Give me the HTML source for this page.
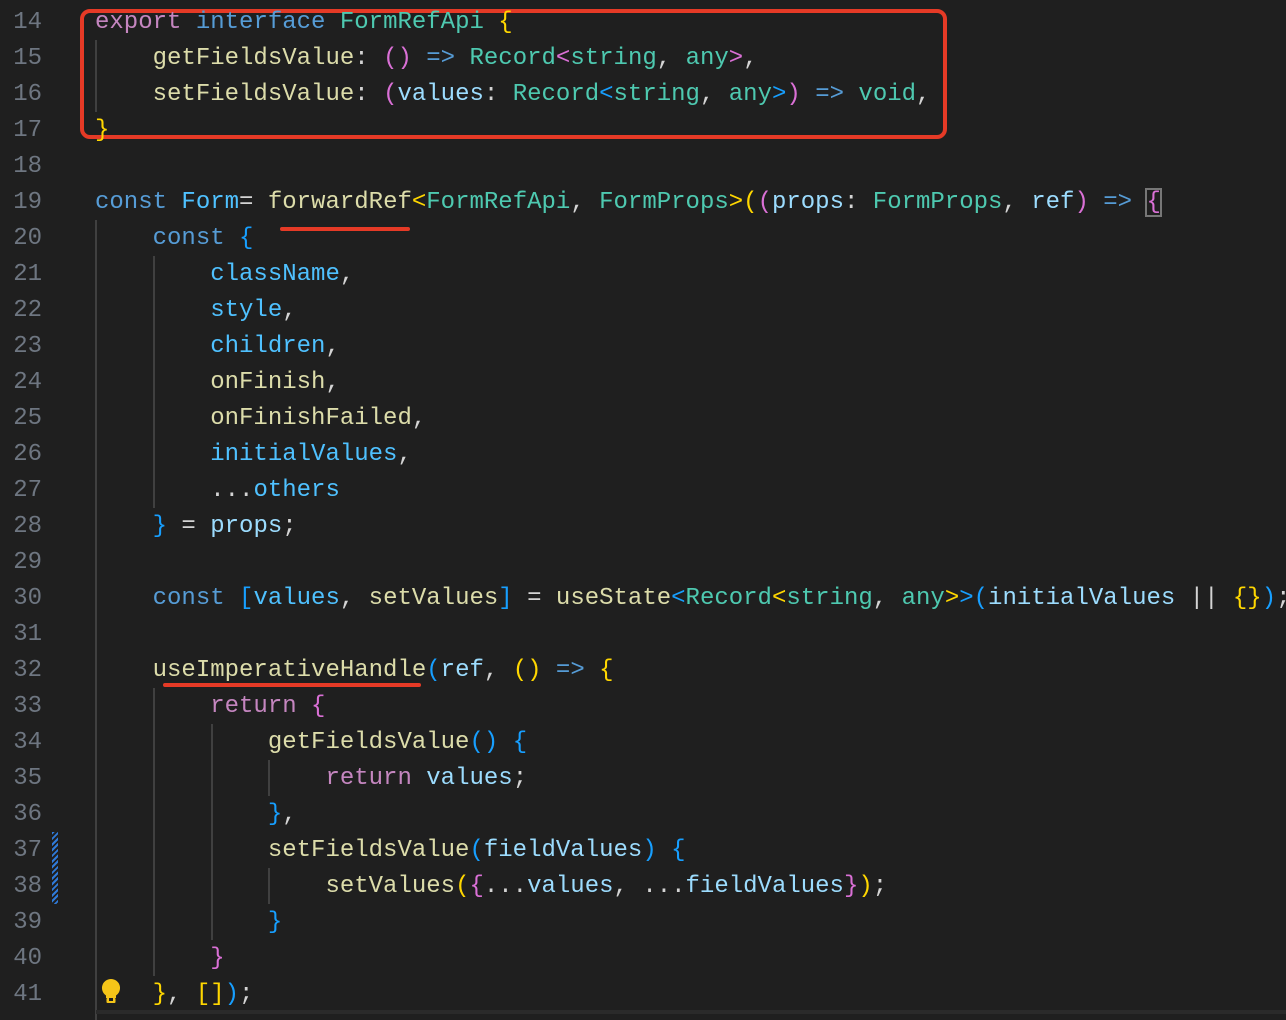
<!DOCTYPE html>
<html><head><meta charset="utf-8"><style>
html,body{margin:0;padding:0;background:#1f1f1f;width:1286px;height:1020px;overflow:hidden;position:relative}
.ln{position:absolute;left:0;width:42px;text-align:right;color:#6e7681;font:24px/36px "Liberation Mono",monospace}
.code{position:absolute;left:95px;top:5px;font:24px/36px "Liberation Mono",monospace;color:#d4d4d4;z-index:2}
.code div{height:36px;white-space:pre}
.k{color:#c586c0}.s{color:#569cd6}.t{color:#4ec9b0}.f{color:#dcdcaa}.v{color:#9cdcfe}.c{color:#4fc1ff}
.g{color:#ffd700}.p{color:#da70d6}.b{color:#179fff}
.guide{position:absolute;width:2px;background:#404040}
.red{position:absolute;background:#e53a26;z-index:1}
</style></head><body>
<div style="position:absolute;left:0;top:5px">
<div class="ln">14</div><div class="ln" style="top:36px">15</div><div class="ln" style="top:72px">16</div><div class="ln" style="top:108px">17</div><div class="ln" style="top:144px">18</div><div class="ln" style="top:180px">19</div><div class="ln" style="top:216px">20</div><div class="ln" style="top:252px">21</div><div class="ln" style="top:288px">22</div><div class="ln" style="top:324px">23</div><div class="ln" style="top:360px">24</div><div class="ln" style="top:396px">25</div><div class="ln" style="top:432px">26</div><div class="ln" style="top:468px">27</div><div class="ln" style="top:504px">28</div><div class="ln" style="top:540px">29</div><div class="ln" style="top:576px">30</div><div class="ln" style="top:612px">31</div><div class="ln" style="top:648px">32</div><div class="ln" style="top:684px">33</div><div class="ln" style="top:720px">34</div><div class="ln" style="top:756px">35</div><div class="ln" style="top:792px">36</div><div class="ln" style="top:828px">37</div><div class="ln" style="top:864px">38</div><div class="ln" style="top:900px">39</div><div class="ln" style="top:936px">40</div><div class="ln" style="top:972px">41</div>
</div>
<div class="guide" style="left:95px;top:40px;height:72px"></div>
<div class="guide" style="left:95px;top:220px;height:800px"></div>
<div class="guide" style="left:153px;top:256px;height:252px"></div>
<div class="guide" style="left:153px;top:688px;height:288px"></div>
<div class="guide" style="left:211px;top:724px;height:216px"></div>
<div class="guide" style="left:268px;top:760px;height:36px"></div>
<div class="guide" style="left:268px;top:868px;height:36px"></div>
<div style="position:absolute;left:52px;top:832px;width:6px;height:72px;background:repeating-linear-gradient(135deg,#2f7ad8 0 2px,transparent 2px 4px)"></div>
<div style="position:absolute;left:96px;top:1010px;width:1190px;height:4px;background:#2a2a2a"></div>
<div style="position:absolute;left:80px;top:9px;width:859px;height:122px;border:4px solid #e53a26;border-radius:10px;z-index:1"></div>
<div class="code"><div><span class="k">export</span> <span class="s">interface</span> <span class="t">FormRefApi</span> <span class="g">{</span></div><div>    <span class="f">getFieldsValue</span>: <span class="p">()</span> <span class="s">=&gt;</span> <span class="t">Record</span><span class="p">&lt;</span><span class="t">string</span>, <span class="t">any</span><span class="p">&gt;</span>,</div><div>    <span class="f">setFieldsValue</span>: <span class="p">(</span><span class="v">values</span>: <span class="t">Record</span><span class="b">&lt;</span><span class="t">string</span>, <span class="t">any</span><span class="b">&gt;</span><span class="p">)</span> <span class="s">=&gt;</span> <span class="t">void</span>,</div><div><span class="g">}</span></div><div></div><div><span class="s">const</span> <span class="c">Form</span>= <span class="f">forwardRef</span><span class="g">&lt;</span><span class="t">FormRefApi</span>, <span class="t">FormProps</span><span class="g">&gt;(</span><span class="p">(</span><span class="v">props</span>: <span class="t">FormProps</span>, <span class="v">ref</span><span class="p">)</span> <span class="s">=&gt;</span> <span class="p" style="outline:2px solid #777;outline-offset:-1px">{</span></div><div>    <span class="s">const</span> <span class="b">{</span></div><div>        <span class="c">className</span>,</div><div>        <span class="c">style</span>,</div><div>        <span class="c">children</span>,</div><div>        <span class="f">onFinish</span>,</div><div>        <span class="f">onFinishFailed</span>,</div><div>        <span class="c">initialValues</span>,</div><div>        ...<span class="c">others</span></div><div>    <span class="b">}</span> = <span class="v">props</span>;</div><div></div><div>    <span class="s">const</span> <span class="b">[</span><span class="c">values</span>, <span class="f">setValues</span><span class="b">]</span> = <span class="f">useState</span><span class="b">&lt;</span><span class="t">Record</span><span class="g">&lt;</span><span class="t">string</span>, <span class="t">any</span><span class="g">&gt;</span><span class="b">&gt;(</span><span class="v">initialValues</span> || <span class="g">{}</span><span class="b">)</span>;</div><div></div><div>    <span class="f">useImperativeHandle</span><span class="b">(</span><span class="v">ref</span>, <span class="g">()</span> <span class="s">=&gt;</span> <span class="g">{</span></div><div>        <span class="k">return</span> <span class="p">{</span></div><div>            <span class="f">getFieldsValue</span><span class="b">()</span> <span class="b">{</span></div><div>                <span class="k">return</span> <span class="v">values</span>;</div><div>            <span class="b">}</span>,</div><div>            <span class="f">setFieldsValue</span><span class="b">(</span><span class="v">fieldValues</span><span class="b">)</span> <span class="b">{</span></div><div>                <span class="f">setValues</span><span class="g">(</span><span class="p">{</span>...<span class="v">values</span>, ...<span class="v">fieldValues</span><span class="p">}</span><span class="g">)</span>;</div><div>            <span class="b">}</span></div><div>        <span class="p">}</span></div><div>    <span class="g">}</span>, <span class="g">[]</span><span class="b">)</span>;</div></div>
<div class="red" style="left:280px;top:227px;width:130px;height:4px;border-radius:2px"></div>
<div class="red" style="left:163px;top:683px;width:258px;height:4px;border-radius:2px;z-index:3"></div>
<svg style="position:absolute;left:100px;top:978px" width="22" height="26" viewBox="0 0 22 26"><path d="M11 1a9 9 0 0 0-5 16.5V20h10v-2.5A9 9 0 0 0 11 1z" fill="#f5c518"/><rect x="6.5" y="20" width="9" height="5" rx="1" fill="#f5c518"/><rect x="9" y="20" width="4" height="3" fill="#1f1f1f"/></svg>
</body></html>
